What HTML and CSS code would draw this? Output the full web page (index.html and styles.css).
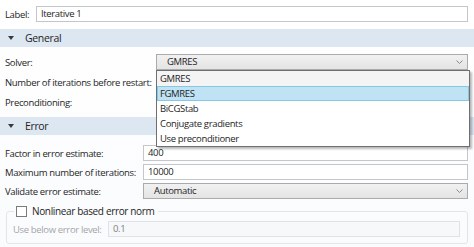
FILE: index.html
```html
<!DOCTYPE html>
<html lang="en">
<head>
    <meta charset="UTF-8">
    <title>Iterative 1</title>
    <link rel="stylesheet" href="styles.css">
</head>
<body>
    <div class="panel">
        <div class="field label-field">
            <span class="field-label">Label:</span>
            <div class="text-box">Iterative 1</div>
        </div>

        <div class="section-head"><span class="caret"></span>General</div>
        <div class="section-body general">
            <div class="field">
                <span class="field-label">Solver:</span>
                <div class="combo-wrap">
                    <div class="combo open">GMRES<svg class="chevron" width="7" height="4" viewBox="0 0 7 4"><polyline points="0.5,0.5 3.5,3.5 6.5,0.5" fill="none" stroke="#8a8a8a" stroke-width="1"/></svg></div>
                    <ul class="dropdown">
                        <li class="first">GMRES</li>
                        <li class="selected">FGMRES</li>
                        <li>BiCGStab</li>
                        <li>Conjugate gradients</li>
                        <li>Use preconditioner</li>
                    </ul>
                </div>
            </div>
            <div class="field">
                <span class="field-label">Number of iterations before restart:</span>
                <div class="text-box"></div>
            </div>
            <div class="field">
                <span class="field-label">Preconditioning:</span>
                <div class="combo"></div>
            </div>
        </div>

        <div class="section-head"><span class="caret"></span>Error</div>
        <div class="section-body error">
            <div class="field">
                <span class="field-label">Factor in error estimate:</span>
                <div class="text-box">400</div>
            </div>
            <div class="field">
                <span class="field-label">Maximum number of iterations:</span>
                <div class="text-box">10000</div>
            </div>
            <div class="field">
                <span class="field-label">Validate error estimate:</span>
                <div class="combo">Automatic<svg class="chevron" width="7" height="4" viewBox="0 0 7 4"><polyline points="0.5,0.5 3.5,3.5 6.5,0.5" fill="none" stroke="#8a8a8a" stroke-width="1"/></svg></div>
            </div>

            <fieldset class="group">
                <legend><span class="checkbox"></span>Nonlinear based error norm</legend>
                <div class="field disabled">
                    <span class="field-label">Use below error level:</span>
                    <div class="text-box">0.1</div>
                </div>
            </fieldset>
        </div>
    </div>
</body>
</html>
```

FILE: styles.css
```css
:root {
    --text-color: #1e1e1e;
    --muted-text: #a3a6aa;
    --header-bg: #dde7f2;
    --panel-bg: #fafbfd;
    --input-border: #c4c6c9;
    --combo-border: #a9abae;
    --highlight-bg: #bfe3f4;
    --highlight-border: #86c8e2;
}

body {
    margin: 0;
    font-family: 'Open Sans', 'Noto Sans', sans-serif;
    font-size: 9.5px;
    letter-spacing: -0.35px;
    color: var(--text-color);
    background-color: #ffffff;
}

.panel {
    width: 474px;
    height: 247px;
    overflow: hidden;
    padding-top: 6px;
    background: linear-gradient(#ffffff, var(--panel-bg));
}

.field {
    display: flex;
    align-items: center;
    height: 16px;
    padding: 0 6px 0 5px;
}

.field-label {
    white-space: nowrap;
}

.label-field .field-label {
    width: 31px;
}

.general .field-label {
    width: 151px;
    flex: none;
}

.error .field-label {
    width: 138px;
    flex: none;
}

.general .field + .field {
    margin-top: 4px;
}

.error .field + .field {
    margin-top: 3px;
}

.text-box,
.combo {
    flex: 1;
    height: 16px;
    box-sizing: border-box;
    line-height: 14px;
    padding-left: 4px;
}

.text-box {
    border: 1px solid var(--input-border);
    background-color: #ffffff;
}

.combo {
    display: flex;
    align-items: center;
    padding-left: 10px;
    border: 1px solid var(--combo-border);
    background: linear-gradient(#f1f1f1, #e4e4e4);
}

.chevron {
    margin-left: auto;
    margin-right: 4px;
}

.combo-wrap {
    flex: 1;
    position: relative;
}

.combo-wrap .combo {
    width: 100%;
}

.dropdown {
    position: absolute;
    top: 16px;
    left: 0;
    width: 314px;
    margin: 0;
    padding: 0;
    list-style: none;
    box-sizing: border-box;
    border: 1px solid #6f6f6f;
    background-color: #ffffff;
    box-shadow: 2px 2px 2px rgba(0, 0, 0, 0.28);
    z-index: 2;
}

.dropdown li {
    height: 15px;
    line-height: 15px;
    padding-left: 3px;
    box-sizing: border-box;
}

.dropdown li.first {
    background-color: #f4f4f4;
}

.dropdown li.selected {
    background-color: var(--highlight-bg);
    border: 1px solid var(--highlight-border);
    line-height: 13px;
    padding-left: 2px;
}

.section-head {
    display: flex;
    align-items: center;
    height: 18px;
    margin-top: 7px;
    background-color: var(--header-bg);
    font-size: 10.5px;
}

.caret {
    width: 0;
    height: 0;
    margin: 0 11px 0 8px;
    border-left: 3px solid transparent;
    border-right: 3px solid transparent;
    border-top: 4px solid #3a3a3a;
}

.section-body.general {
    padding: 7px 0 0;
}

.section-body.error {
    padding: 10px 0 0;
}

.group {
    margin: 6px 6px 0 6px;
    padding: 4px 7px 6px 6px;
    border: 1px solid #e2e5ea;
    border-radius: 3px;
}

.group legend {
    display: flex;
    align-items: center;
    height: 12px;
    padding: 0 4px 0 2px;
    margin-left: 1px;
    font-size: 10px;
}

.checkbox {
    width: 9px;
    height: 9px;
    margin-right: 5px;
    border: 1px solid #7a7a7a;
    background-color: #ffffff;
}

.group .field {
    padding: 0;
}

.group .field-label {
    width: 95px;
    flex: none;
}

.field.disabled {
    color: var(--muted-text);
}

.field.disabled .text-box {
    border-color: #e0e2e5;
    background-color: #f7f8f9;
    color: #7d7f82;
}
```
